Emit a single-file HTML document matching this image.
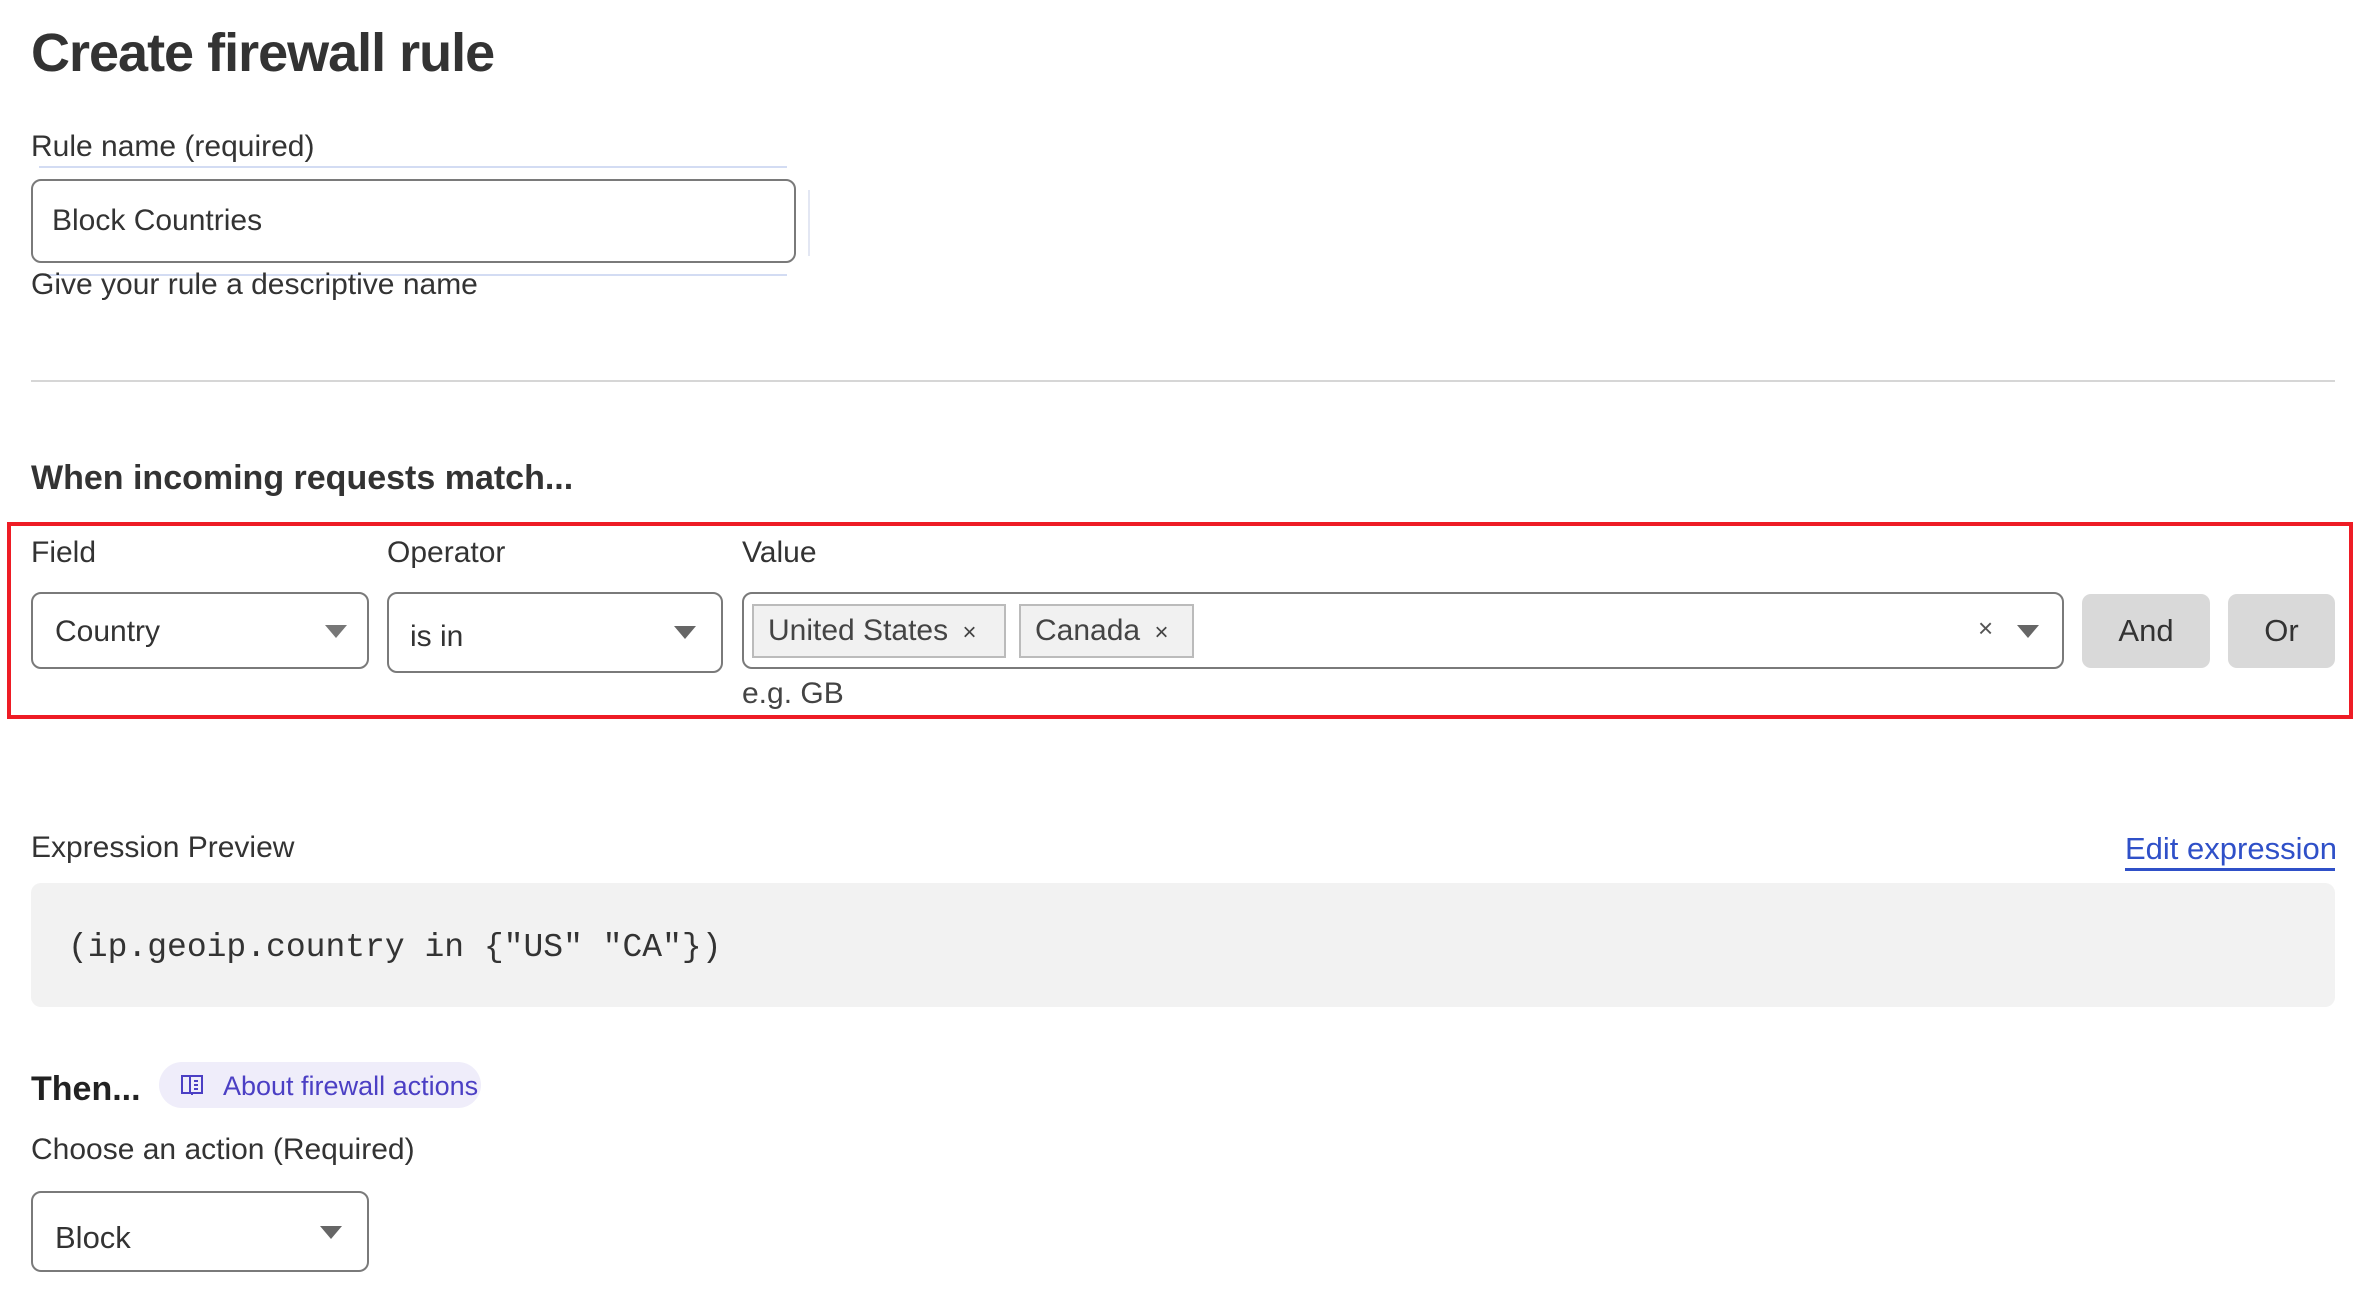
<!DOCTYPE html>
<html><head><meta charset="utf-8"><style>
*{box-sizing:border-box;margin:0;padding:0}
body{width:2369px;height:1300px;background:#fff;font-family:"Liberation Sans",sans-serif;color:#333;position:relative;overflow:hidden}
.a{position:absolute;white-space:nowrap}
.t{font-size:30px;line-height:1}
.box{position:absolute;border:2px solid #7a7a7a;border-radius:10px;background:#fff}
.tri{position:absolute;width:0;height:0;border-left:11px solid transparent;border-right:11px solid transparent;border-top:13px solid #666}
.tag{position:absolute;top:10px;height:54px;background:#f1f1f1;border:2px solid #bbb;font-size:30px;line-height:50px;padding-left:14px;color:#444}
.btn{position:absolute;background:#d9d9d9;border-radius:9px;font-size:31px;text-align:center;line-height:74px;color:#333}
</style></head><body>
<div class="a" style="left:31px;top:22px;font-size:54px;font-weight:bold;letter-spacing:-1px;color:#333">Create firewall rule</div>
<div class="a t" style="left:31px;top:132px">Rule name (required)</div>
<div class="a" style="left:39px;top:166px;width:748px;height:2px;background:#d3dcf3"></div>
<div class="box" style="left:31px;top:179px;width:765px;height:84px"></div>
<div class="a" style="left:808px;top:190px;width:2px;height:66px;background:#e3e7f3"></div>
<div class="a t" style="left:52px;top:206px">Block Countries</div>
<div class="a" style="left:39px;top:274px;width:748px;height:2px;background:#d3dcf3"></div>
<div class="a t" style="left:31px;top:270px">Give your rule a descriptive name</div>
<div class="a" style="left:31px;top:380px;width:2304px;height:2px;background:#d6d6d6"></div>
<div class="a" style="left:31px;top:459px;font-size:34px;font-weight:bold;color:#333">When incoming requests match...</div>
<div class="a" style="left:7px;top:522px;width:2346px;height:197px;border:4px solid #ee1c25"></div>
<div class="a t" style="left:31px;top:538px">Field</div>
<div class="a t" style="left:387px;top:538px">Operator</div>
<div class="a t" style="left:742px;top:538px">Value</div>
<div class="box" style="left:31px;top:592px;width:338px;height:77px"></div>
<div class="a t" style="left:55px;top:617px">Country</div>
<div class="tri" style="left:325px;top:625px;border-top-color:#777"></div>
<div class="box" style="left:387px;top:592px;width:336px;height:81px"></div>
<div class="a t" style="left:410px;top:622px">is in</div>
<div class="tri" style="left:674px;top:626px"></div>
<div class="box" style="left:742px;top:592px;width:1322px;height:77px">
<div class="tag" style="left:8px;width:254px">United States <span style="font-size:24px;margin-left:6px">×</span></div>
<div class="tag" style="left:275px;width:175px">Canada <span style="font-size:24px;margin-left:6px">×</span></div>
</div>
<div class="a" style="left:1978px;top:613px;font-size:26px;color:#555">×</div>
<div class="tri" style="left:2017px;top:625px"></div>
<div class="a t" style="left:742px;top:679px;color:#444">e.g. GB</div>
<div class="btn" style="left:2082px;top:594px;width:128px;height:74px">And</div>
<div class="btn" style="left:2228px;top:594px;width:107px;height:74px">Or</div>
<div class="a t" style="left:31px;top:833px">Expression Preview</div>
<div class="a" style="left:2125px;top:831px;font-size:31px;color:#2f50c8">Edit expression</div>
<div class="a" style="left:2125px;top:868px;width:210px;height:3px;background:#2f50c8"></div>
<div class="a" style="left:31px;top:883px;width:2304px;height:124px;background:#f2f2f2;border-radius:10px"></div>
<div class="a" style="left:68px;top:929px;font-family:'Liberation Mono',monospace;font-size:33px;color:#333">(ip.geoip.country in {"US" "CA"})</div>
<div class="a" style="left:31px;top:1070px;font-size:34px;font-weight:bold;color:#222">Then...</div>
<div class="a" style="left:159px;top:1062px;width:322px;height:46px;background:#efedfa;border-radius:23px"></div>
<svg class="a" style="left:180px;top:1073px" width="24" height="24" viewBox="0 0 24 24" fill="none" stroke="#4b3fc4" stroke-width="2"><path d="M2 3h8v17H2zM10 3h12v17H10zM14 8h4M14 12h4M14 16h4M12 20v2"/></svg>
<div class="a" style="left:223px;top:1071px;font-size:27px;color:#4b3fc4">About firewall actions</div>
<div class="a t" style="left:31px;top:1135px">Choose an action (Required)</div>
<div class="box" style="left:31px;top:1191px;width:338px;height:81px"></div>
<div class="a t" style="left:55px;top:1222px;font-size:31px">Block</div>
<div class="tri" style="left:320px;top:1226px"></div>
</body></html>
